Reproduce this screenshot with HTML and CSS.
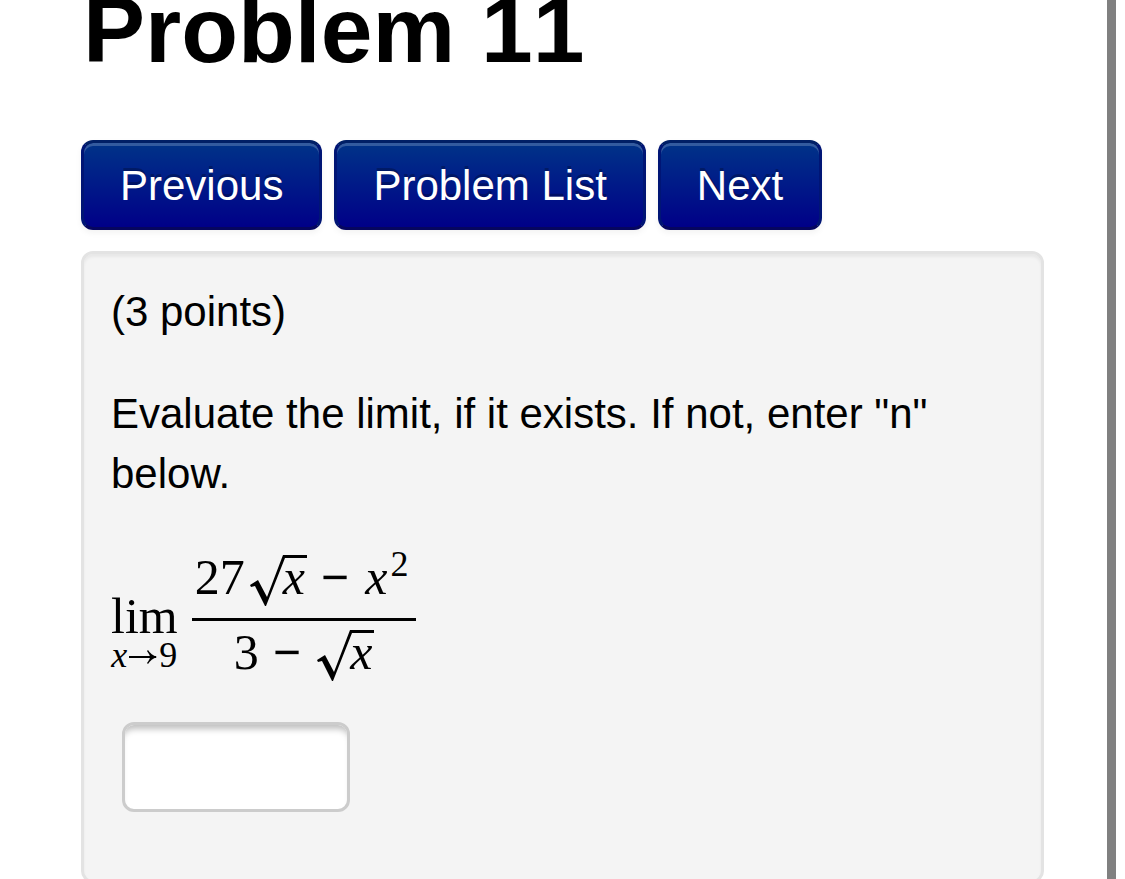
FILE: index.html
```
<!DOCTYPE html>
<html lang="en">
<head>
<meta charset="utf-8">
<meta name="viewport" content="width=device-width, initial-scale=1">
<title>Problem 11</title>
<link rel="stylesheet" href="styles.css">
</head>
<body>
<main class="page">
  <h1 class="title">Problem 11</h1>
  <nav class="nav">
    <a class="btn" href="#previous">Previous</a>
    <a class="btn" href="#list">Problem List</a>
    <a class="btn" href="#next">Next</a>
  </nav>
  <section class="problem">
    <p class="text">(3 points)</p>
    <p class="text">Evaluate the limit, if it exists. If not, enter "n" below.</p>
    <div class="math">
      <div class="limit">
        <span class="lim">lim</span>
        <span class="under"><i>x</i><svg class="arrow" viewBox="0 0 32 16" aria-label="to"><path d="M2 8H29" fill="none" stroke="#000" stroke-width="2"/><path d="M21 1Q24 6 30 8Q24 10 21 15L20 14Q23 10 23 8Q23 6 20 2Z"/></svg>9</span>
      </div>
      <div class="fraction">
        <div class="row">
          <span class="term">27<span class="root"><svg class="radical" viewBox="0 0 35 52" aria-hidden="true"><path d="M0 30L8 25L17 42L33 0H35V3L16 51H15L5 31L1 32Z"/></svg><i class="radicand">x</i></span></span>
          <span class="minus">−</span>
          <span class="power"><i>x</i><sup class="exp">2</sup></span>
        </div>
        <div class="row below">
          <span>3</span>
          <span class="minus">−</span>
          <span class="root"><svg class="radical" viewBox="0 0 35 52" aria-hidden="true"><path d="M0 30L8 25L17 42L33 0H35V3L16 51H15L5 31L1 32Z"/></svg><i class="radicand">x</i></span>
        </div>
      </div>
    </div>
    <input class="answer" type="text" aria-label="Answer">
  </section>
</main>
</body>
</html>
```
FILE: styles.css
```
* { box-sizing: border-box; }
body {
  margin: 0;
  height: 100vh;
  overflow: hidden;
  background: #fff;
  color: #000;
  font-family: "Liberation Sans", Arial, sans-serif;
  font-size: 42px;
  line-height: 60px;
}
.page {
  min-height: 100vh;
  margin-right: 9px;
  padding: 0 63px 0 81px;
  border-right: 9px solid #808080;
}
.title {
  margin: 0 0 80px;
  font-size: 93px;
  padding-left: 2px;
  line-height: 60px;
  font-weight: bold;
  font-kerning: none;
}
.nav { display: flex; gap: 12px; margin-bottom: 21px; }
.btn {
  padding: 13px 36px 11px;
  border: 3px solid;
  border-color: #001f66 #001575 #06065f;
  border-radius: 12px;
  background: linear-gradient(#003388, #000088) padding-box, #001a70;
  box-shadow: inset 0 3px 0 rgba(255, 255, 255, .2), 0 3px 6px rgba(0, 0, 0, .05);
  color: #fff;
  text-decoration: none;
  text-shadow: 0 -3px 0 rgba(0, 0, 0, .25);
}
.problem {
  padding: 28px 27px 68px;
  border: 3px solid #e3e3e3;
  border-radius: 12px;
  background: #f4f4f4;
  box-shadow: inset 0 3px 3px rgba(0, 0, 0, .05);
}
.text { margin: 0 0 42px; }
.math {
  display: flex;
  align-items: flex-start;
  gap: 14px;
  margin-top: -1px;
  font-family: "Liberation Serif", "Times New Roman", serif;
  font-size: 50px;
  line-height: 38px;
}
.limit { display: flex; flex-direction: column; align-items: center; padding-top: 52px; }
.under { display: flex; align-items: center; padding-top: 1px; font-size: 36px; }
.arrow { width: 32px; height: 16px; margin-top: 4px; }
.fraction { display: flex; flex-direction: column; }
.row {
  display: flex;
  align-items: baseline;
  justify-content: center;
  height: 73px;
  padding: 10px 8px 0 3px;
}
.below { height: 94px; padding: 9px 0 0; border-top: 3px solid #000; }
.term { display: flex; align-items: baseline; gap: 5px; }
.minus { margin: 0 16px 0 14px; font-weight: bold; }
.root { display: flex; align-items: flex-start; }
.radical { width: 35px; height: 52px; margin-right: -2px; margin-bottom: -11px; }
.radicand { align-self: baseline; width: 24px; border-top: 3px solid #000; }
.power { display: flex; align-items: baseline; gap: 3px; }
.exp { font-size: 36px; line-height: 20px; position: relative; top: -18px; vertical-align: baseline; }
.answer {
  display: block;
  width: 228px;
  height: 90px;
  margin: 10px 0 0 11px;
  padding: 12px 18px;
  border: 3px solid #ccc;
  border-radius: 12px;
  background: #fff;
  box-shadow: inset 0 8px 6px -4px rgba(0, 0, 0, .25);
  font: inherit;
}
```
